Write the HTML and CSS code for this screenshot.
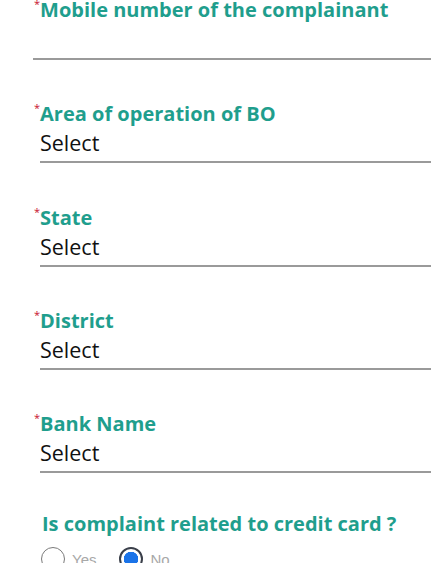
FILE: index.html
```html
<!DOCTYPE html>
<html>
<head>
<meta charset="utf-8">
<link rel="stylesheet" href="styles.css">
</head>
<body>
<div class="form">
  <div class="field mobile">
    <div class="label"><span class="req">*</span>Mobile number of the complainant</div>
    <div class="input"></div>
  </div>
  <div class="field">
    <div class="label"><span class="req">*</span>Area of operation of BO</div>
    <div class="select">Select</div>
  </div>
  <div class="field">
    <div class="label"><span class="req">*</span>State</div>
    <div class="select">Select</div>
  </div>
  <div class="field">
    <div class="label"><span class="req">*</span>District</div>
    <div class="select">Select</div>
  </div>
  <div class="field">
    <div class="label"><span class="req">*</span>Bank Name</div>
    <div class="select">Select</div>
  </div>
  <div class="question">
    <div class="qlabel">Is complaint related to credit card ?</div>
    <div class="radios">
      <span class="opt"><span class="radio"></span><span class="otext">Yes</span></span>
      <span class="opt"><span class="radio checked"></span><span class="otext">No</span></span>
    </div>
  </div>
</div>
</body>
</html>
```
FILE: styles.css
```css
html, body {
  margin: 0;
  padding: 0;
  background: #ffffff;
  overflow: hidden;
}
.form {
  font-family: "Open Sans", sans-serif;
  padding-left: 33px;
  display: flex;
  flex-direction: column;
  gap: 44.3px;
}
.label {
  color: #1f9e8d;
  font-weight: 700;
  font-size: 20px;
  line-height: 19px;
  padding-left: 1px;
  white-space: nowrap;
}
.req {
  color: #c8102e;
  font-size: 11px;
  font-weight: 400;
  vertical-align: top;
  line-height: 8px;
  position: relative;
  top: 0px;
}
.input {
  height: 39px;
  border-bottom: 2px solid #9a9a9a;
}
.select {
  margin-left: 7px;
  font-size: 21.5px;
  line-height: 28px;
  color: #111;
  border-bottom: 2px solid #9a9a9a;
  padding-top: 6px;
  padding-bottom: 4px;
}
.question {
  padding-left: 9px;
  margin-top: -3px;
}
.qlabel {
  color: #1f9e8d;
  font-weight: 700;
  font-size: 20px;
  line-height: 19px;
  white-space: nowrap;
}
.radios {
  display: flex;
  gap: 23px;
  margin-top: 14px;
  margin-left: -1px;
  font-family: "Liberation Sans", Arial, sans-serif;
}
.opt {
  display: flex;
  align-items: center;
  gap: 7px;
}
.radio {
  width: 24px;
  height: 24px;
  border: 1.5px solid #7a7a7a;
  border-radius: 50%;
  box-sizing: border-box;
  display: inline-block;
}
.radio.checked {
  border: 2px solid #3a3f4a;
  background: radial-gradient(circle, #1a73e8 0 7px, #ffffff 7.5px);
}
.otext {
  color: #a8a8a8;
  font-size: 15px;
}
```
